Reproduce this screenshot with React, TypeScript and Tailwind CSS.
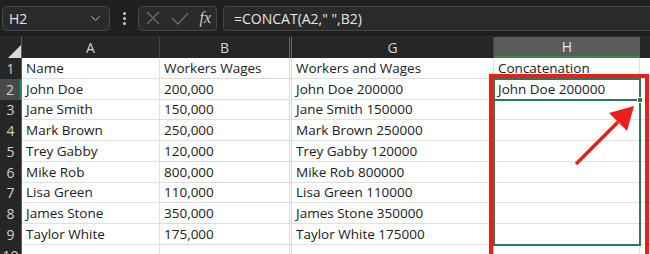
import { ChevronDown } from "lucide-react";

const rows = [
  ["Name", "Workers Wages", "Workers and Wages", "Concatenation"],
  ["John Doe", "200,000", "John Doe 200000", "John Doe 200000"],
  ["Jane Smith", "150,000", "Jane Smith 150000", ""],
  ["Mark Brown", "250,000", "Mark Brown 250000", ""],
  ["Trey Gabby", "120,000", "Trey Gabby 120000", ""],
  ["Mike Rob", "800,000", "Mike Rob 800000", ""],
  ["Lisa Green", "110,000", "Lisa Green 110000", ""],
  ["James Stone", "350,000", "James Stone 350000", ""],
  ["Taylor White", "175,000", "Taylor White 175000", ""],
  ["", "", "", ""],
];

const font = "font-['Open_Sans','Noto_Sans',sans-serif]";

export default function App() {
  return (
    <div className={`relative w-[650px] h-[254px] overflow-hidden bg-[#1f1f1f] ${font}`}>
      {/* formula bar */}
      <div className="flex items-center h-[37px] pl-[2px] gap-[6px] border-b border-[#2c2c2c]">
        <div className="flex items-center justify-between w-[108px] h-[25px] rounded-[4px] border border-[#454545] bg-[#2a2a2a] pl-[6px] pr-[6px]">
          <span className="text-[14px] text-[#e2e2e2]">H2</span>
          <ChevronDown size={15} strokeWidth={1.5} className="text-[#c8c8c8]" />
        </div>
        <div className="flex flex-col items-center justify-center gap-[2px] w-[16px]">
          <span className="block w-[3px] h-[3px] rounded-full bg-[#c8c8c8]" />
          <span className="block w-[3px] h-[3px] rounded-full bg-[#c8c8c8]" />
          <span className="block w-[3px] h-[3px] rounded-full bg-[#c8c8c8]" />
        </div>
        <div className="flex items-center justify-between w-[79px] h-[25px] rounded-[4px] border border-[#454545] bg-[#2a2a2a] pl-[6px] pr-[5px]">
          <svg width="16" height="16" viewBox="0 0 16 16">
            <path d="M2 2 L14 14 M14 2 L2 14" stroke="#6b6b6b" strokeWidth="1.3" fill="none" />
          </svg>
          <svg width="20" height="16" viewBox="0 0 20 16">
            <path d="M2 8 L8 14 L18 3" stroke="#6b6b6b" strokeWidth="1.3" fill="none" />
          </svg>
          <span className="font-['Liberation_Serif',serif] italic text-[16px] leading-none text-[#c8c8c8]">fx</span>
        </div>
        <div className="flex items-center flex-1 h-[25px] rounded-l-[4px] border border-r-0 border-[#454545] bg-[#2a2a2a] pl-[10px]">
          <span className="text-[14px] text-[#e6e6e6]">=CONCAT(A2," ",B2)</span>
        </div>
      </div>

      {/* sheet */}
      <div className="grid grid-cols-[22px_138px_132px_202px_146px_1fr] text-[13.5px]">
        {/* header */}
        <div className="h-[21px] bg-[#262626] border-r border-[#5a5a5a] flex items-end justify-end">
          <svg width="14" height="14" viewBox="0 0 14 14">
            <polygon points="14,1 14,14 1,14" fill="#d8d8d8" />
          </svg>
        </div>
        <div className="h-[21px] bg-[#262626] border-r border-[#444] flex items-center justify-center text-[14px] text-[#d4d4d4]">A</div>
        <div className="h-[21px] bg-[#262626] border-r-[3px] border-double border-[#666] flex items-center justify-center text-[14px] text-[#d4d4d4]">B</div>
        <div className="h-[21px] bg-[#262626] border-r border-[#444] flex items-center justify-center text-[14px] text-[#d4d4d4]">G</div>
        <div className="h-[21px] bg-[#5a5a5a] border-b-2 border-[#2f8a55] flex items-center justify-center text-[14px] text-[#e8e8e8]">H</div>
        <div className="h-[21px] bg-[#262626]" />

        {rows.map((r, i) => {
          const n = i + 1;
          return (
            <div key={n} className="contents">
              <div
                className={`h-[20.75px] flex items-center justify-center text-[14px] text-[#d0d0d0] ${
                  n === 2 ? "bg-[#4a4a4a] border-r-2 border-[#2f8a55]" : "bg-[#262626] border-r border-[#5a5a5a]"
                }`}
              >
                {n}
              </div>
              <div className="h-[20.75px] bg-white border-r border-b border-[#e1e1e1] pl-[4px] flex items-center text-[#202020] whitespace-nowrap overflow-hidden">{r[0]}</div>
              <div className="h-[20.75px] bg-white border-r-[3px] border-double border-b border-[#dcdcdc] pl-[4px] flex items-center text-[#202020] whitespace-nowrap overflow-hidden">{r[1]}</div>
              <div className="h-[20.75px] bg-white border-r border-b border-[#e1e1e1] pl-[4px] flex items-center text-[#202020] whitespace-nowrap overflow-hidden">{r[2]}</div>
              <div className="h-[20.75px] bg-white border-r border-b border-[#e1e1e1] pl-[4px] flex items-center text-[#202020] whitespace-nowrap overflow-hidden">{r[3]}</div>
              <div className="h-[20.75px] bg-white border-b border-[#e1e1e1]" />
            </div>
          );
        })}
      </div>

      {/* selection H2:H9 */}
      <div className="absolute left-[493px] top-[78px] w-[148px] h-[168px] border-2 border-[#2e7a4e]" />
      <div className="absolute left-[493px] top-[99px] w-[148px] h-[2px] bg-[#2e7a4e]" />
      <div className="absolute left-[637px] top-[97px] w-[6px] h-[6px] bg-[#2e7a4e] border border-white" />

      {/* annotation */}
      <div className="absolute left-[489px] top-[74px] w-[160px] h-[184px] border-[4px] border-[#ee1c1c]" />
      <svg className="absolute left-0 top-0" width="650" height="254" viewBox="0 0 650 254">
        <line x1="576" y1="164" x2="618" y2="122" stroke="#ee1c1c" strokeWidth="3.5" />
        <polygon points="634,106 609,113 627,131" fill="#ee1c1c" />
      </svg>
    </div>
  );
}
